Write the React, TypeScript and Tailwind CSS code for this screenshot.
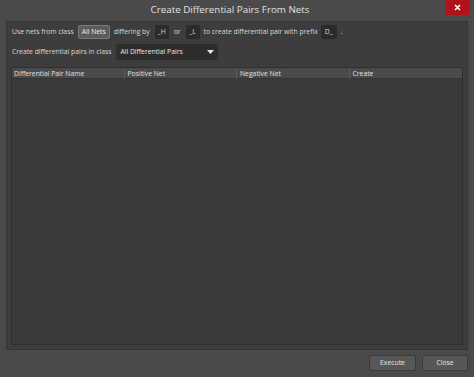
import React from "react";

export default function App() {
  const font = { fontFamily: '"Open Sans", "Noto Sans", sans-serif' };
  return (
    <div className="w-[474px] h-[377px] bg-[#4a4a4a] flex flex-col text-[#d8d8d8] overflow-hidden" style={font}>
      <div className="h-[21px] flex items-start relative">
        <div className="flex-1 pr-[14px] text-center text-[9.8px] leading-[20px] text-[#e0e0e0]">Create Differential Pairs From Nets</div>
        <div className="absolute right-[5px] top-0 w-[23px] h-[15px] bg-[#b0121a] flex items-center justify-center">
          <svg width="7" height="7" viewBox="0 0 7 7"><path d="M1 1L6 6M6 1L1 6" stroke="#fff" strokeWidth="1.6" /></svg>
        </div>
      </div>
      <div className="mx-[6px] h-[329px] bg-[#3d3d3d] border border-[#363636] flex flex-col px-[4px]">
        <div className="h-[20px] flex items-center text-[6.8px] whitespace-nowrap">
          <span className="ml-[1px]">Use nets from class</span>
          <span className="ml-[4px] px-[3px] h-[14px] flex items-center bg-[#5c5c5c] border border-[#7a7a7a] rounded-[2px] text-[#eee]">All Nets</span>
          <span className="ml-[4px]">differing by</span>
          <span className="ml-[5px] w-[14px] h-[14px] flex items-center justify-center bg-[#2b2b2b] rounded-[2px]">_H</span>
          <span className="ml-[5px]">or</span>
          <span className="ml-[5px] w-[14px] h-[14px] flex items-center justify-center bg-[#2b2b2b] rounded-[2px]">_L</span>
          <span className="ml-[4px]">to create differential pair with prefix</span>
          <span className="ml-[3px] w-[16px] h-[14px] flex items-center justify-center bg-[#2b2b2b] rounded-[2px]">D_</span>
          <span className="ml-[4px]">.</span>
        </div>
        <div className="h-[20px] flex items-center text-[6.8px] whitespace-nowrap">
          <span className="ml-[1px]">Create differential pairs in class</span>
          <div className="ml-[5px] w-[102px] h-[16px] bg-[#2d2d2d] rounded-[3px] flex items-center justify-between px-[4px]">
            <span className="text-[#e6e6e6]">All Differential Pairs</span>
            <svg width="7" height="4" viewBox="0 0 7 4"><path d="M0 0H7L3.5 4Z" fill="#e6e6e6" /></svg>
          </div>
        </div>
        <div className="mt-[5px] h-[278px] border border-[#2e2e2e] bg-[#3a3a3a] flex flex-col">
          <div className="h-[11px] bg-[#4a4a4a] grid grid-cols-4 text-[6.8px] leading-[11px] text-[#e0e0e0] border-b border-[#333]">
            <div className="pl-[2px] border-r border-[#5a5a5a]">Differential Pair Name</div>
            <div className="pl-[3px] border-r border-[#5a5a5a]">Positive Net</div>
            <div className="pl-[3px] border-r border-[#5a5a5a]">Negative Net</div>
            <div className="pl-[3px]">Create</div>
          </div>
          <div className="flex-1" />
        </div>
      </div>
      <div className="flex justify-end gap-[6px] pr-[6px] mt-[5px]">
        <button className="w-[47px] h-[16px] bg-[#575757] border border-[#3a3a3a] rounded-[2px] text-[6.8px] text-[#e6e6e6]">Execute</button>
        <button className="w-[46px] h-[16px] bg-[#575757] border border-[#3a3a3a] rounded-[2px] text-[6.8px] text-[#e6e6e6]">Close</button>
      </div>
    </div>
  );
}
